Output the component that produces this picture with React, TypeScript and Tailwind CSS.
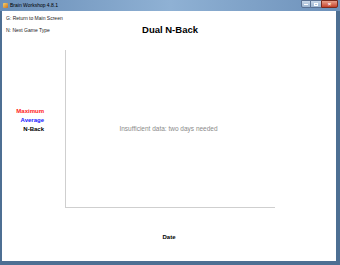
export default function App() {
  return (
    <div className="w-[340px] h-[265px] flex flex-col bg-[#4d6f93] font-['Liberation_Sans',Arial,sans-serif] overflow-hidden">
      {/* title bar */}
      <div className="h-[11px] flex items-center justify-between bg-gradient-to-r from-[#6b8fb8] via-[#8fb1d4] to-[#6d91ba] pl-[3px] pr-[2px]">
        <div className="flex items-center gap-[2px]">
          <div className="w-[5px] h-[5px] rounded-[1px] bg-gradient-to-br from-[#f7d26a] to-[#c8721a]" />
          <span className="text-[5px] leading-none text-black">Brain Workshop 4.8.1</span>
        </div>
        <div className="flex items-start self-start">
          <div className="w-[10px] h-[8px] bg-gradient-to-b from-[#c9d8ea] to-[#9db5d1] border border-[#5a7193] rounded-bl-[2px] flex items-end justify-center pb-[2px]">
            <div className="w-[4px] h-[1px] bg-white" />
          </div>
          <div className="w-[10px] h-[8px] bg-gradient-to-b from-[#c9d8ea] to-[#9db5d1] border-y border-[#5a7193] flex items-center justify-center">
            <div className="w-[4px] h-[3px] border border-white" />
          </div>
          <div className="w-[17px] h-[8px] bg-gradient-to-b from-[#e8a08c] to-[#c4402a] border border-[#7a2a1c] rounded-br-[2px] flex items-center justify-center text-white text-[6px] leading-none font-bold">
            ×
          </div>
        </div>
      </div>

      {/* client area */}
      <div className="flex-1 ml-[2px] mr-[4px] mb-[4px] bg-white flex flex-col">
        <div className="flex h-[34px]">
          <div className="w-[130px] flex flex-col pl-[4px] pt-[4px] gap-[6px] text-[5px] leading-[6px] text-[#222]">
            <span>G: Return to Main Screen</span>
            <span>N: Next Game Type</span>
          </div>
          <div className="w-[76px] pt-[14px] text-center text-[9.5px] leading-none font-bold text-black whitespace-nowrap">
            Dual N-Back
          </div>
        </div>

        <div className="flex h-[162px]">
          <div className="w-[63px] flex flex-col items-end pr-[21px] pt-[63px] gap-[2px] text-[6px] leading-[7px] font-bold">
            <span className="text-[#ff2020]">Maximum</span>
            <span className="text-[#2020ff]">Average</span>
            <span className="text-black">N-Back</span>
          </div>
          <div className="w-[210px] h-[158px] mt-[5px] border-l border-b border-[#cfcfcf] flex items-center justify-center">
            <span className="text-[6.5px] leading-none text-[#8a8a8a] pt-[2px] pr-[4px]">Insufficient data: two days needed</span>
          </div>
        </div>

        <div className="flex justify-center pt-[27px]">
          <span className="text-[6px] leading-none font-bold text-black">Date</span>
        </div>
      </div>
    </div>
  );
}
